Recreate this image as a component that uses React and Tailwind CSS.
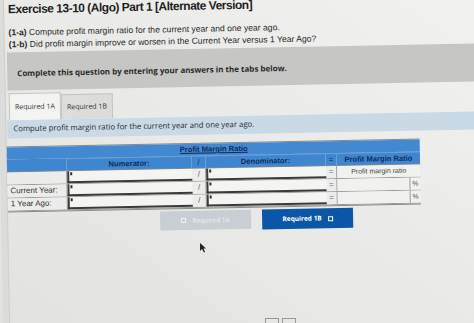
import React from 'react';

const COLS = 'grid-cols-[60px_125px_14px_120px_11px_83px]';

// Small dropdown marker drawn in the corner of each answer field
function Marker() {
  return <span className="absolute left-[1px] top-[1px] h-[3px] w-[2px] bg-[#333]" />;
}

function InputCell() {
  return (
    <div className="relative h-full border-b-2 border-l-2 border-[#3a3a3a] bg-[#f4f4f2]">
      <Marker />
    </div>
  );
}

function DataRow({ label }) {
  return (
    <div className={`grid h-[13px] ${COLS} border-b border-[#9a9a9a] text-[8px] leading-[12px]`}>
      <div className="border-r border-[#9a9a9a] bg-[#ececea] pl-[3px] text-[#333]">{label}</div>
      <InputCell />
      <div className="border-r border-[#9a9a9a] bg-[#ececea] text-center text-[#666]">/</div>
      <InputCell />
      <div className="border-r border-[#9a9a9a] bg-[#ececea] text-center text-[#7a8aa0]">=</div>
      <div className="flex bg-[#f1f1ef]">
        <div className="flex-1 border-r border-[#9a9a9a]" />
        <div className="w-[10px] text-center text-[7px] text-[#555]">%</div>
      </div>
    </div>
  );
}

export default function App() {
  return (
    <div className="relative h-[323px] w-[474px] overflow-hidden bg-linear-to-tr from-[#e2e2e0] to-[#f1f1ef] font-['Liberation_Sans',Arial,sans-serif]">
      {/* the sheet sits slightly tilted on screen */}
      <div className="flex h-[323px] w-[474px] rotate-[-1.1deg]">
        <div className="mt-[-20px] h-[370px] w-[7px] shrink-0 border-r border-[#cfcfcd] bg-[#dcdcda]" />

        <div className="flex flex-1 flex-col">
          <h1 className="mt-[-3px] pl-[4px] text-[12px] font-bold leading-[16px] tracking-[-0.5px] text-[#1f1f1f]">
            Exercise 13-10 (Algo) Part 1 [Alternate Version]
          </h1>

          <div className="mt-[9px] pl-[4px] text-[8.6px] leading-[12px] text-[#2a2a2a]">
            <p><span className="font-bold">(1-a)</span> Compute profit margin ratio for the current year and one year ago.</p>
            <p><span className="font-bold">(1-b)</span> Did profit margin improve or worsen in the Current Year versus 1 Year Ago?</p>
          </div>

          <div className="-mr-[30px] mt-[2px] ml-[2px] flex h-[38px] items-center bg-[#c6c6c4] pl-[10px] pt-[4px] font-['Open_Sans',sans-serif] text-[8px] font-bold text-[#2a2a2a]">
            Complete this question by entering your answers in the tabs below.
          </div>

          <div className="mt-[3px] flex items-end pl-[3px] font-['Open_Sans',sans-serif] text-[7px] text-[#333]">
            <div className="flex h-[27px] w-[52px] items-center justify-center border border-b-0 border-[#c4c4c2] bg-[#f3f3f1]">
              Required 1A
            </div>
            <div className="flex h-[25px] w-[52px] items-center justify-center border border-b-0 border-[#c4c4c2] bg-[#dcdcda]">
              Required 1B
            </div>
          </div>

          <div className="-mr-[30px] ml-[1px] flex h-[18px] items-center bg-[#c9d9e6] pl-[6px] font-['Open_Sans',sans-serif] text-[7.75px] text-[#2a2a2a]">
            Compute profit margin ratio for the current year and one year ago.
          </div>

          <div className="mt-[8px] w-[413px] border-y border-[#8a8a8a]">
            <div className="h-[12px] bg-[#4389d2] pl-[173px] text-[7.6px] font-bold leading-[12px] text-[#0f2c5a] underline">
              Profit Margin Ratio
            </div>
            <div className={`grid h-[13px] ${COLS} border-b border-[#8a8a8a] bg-[#3f86d0] text-[7.6px] font-bold leading-[12px] text-[#0f2c5a]`}>
              <div className="border-r border-[#6f9fd0]" />
              <div className="border-r border-t border-[#6f9fd0] text-center">Numerator:</div>
              <div className="border-r border-t border-[#6f9fd0] text-center font-normal">/</div>
              <div className="border-r border-t border-[#6f9fd0] text-center">Denominator:</div>
              <div className="border-r border-t border-[#6f9fd0] text-center font-normal">=</div>
              <div className="border-t border-[#6f9fd0] text-center">Profit Margin Ratio</div>
            </div>

            <div className={`grid h-[13px] ${COLS} border-b border-[#9a9a9a] text-[8px] leading-[12px]`}>
              <div className="border-r border-[#9a9a9a] bg-[#ececea]" />
              <InputCell />
              <div className="border-r border-[#9a9a9a] bg-[#ececea] text-center text-[#666]">/</div>
              <InputCell />
              <div className="border-r border-[#9a9a9a] bg-[#ececea] text-center text-[#7a8aa0]">=</div>
              <div className="bg-[#f1f1ef] text-center text-[7px] text-[#444]">Profit margin ratio</div>
            </div>
            <DataRow label="Current Year:" />
            <DataRow label="1 Year Ago:" />
          </div>

          <div className="mt-[2px] flex items-start pl-[152px] font-['Open_Sans',sans-serif] text-[6.5px]">
            <button className="flex h-[19px] w-[91px] items-center justify-center gap-[6px] bg-[#c8ced3] text-[#eef2f5]">
              <span className="inline-block h-[5px] w-[5px] border border-[#eef2f5]" />
              Required 1A
            </button>
            <button className="ml-[11px] flex h-[20px] w-[91px] items-center justify-center gap-[6px] bg-[#0c56a8] font-bold text-white">
              Required 1B
              <span className="inline-block h-[5px] w-[5px] border border-white" />
            </button>
          </div>
        </div>
      </div>

      {/* mouse pointer resting below the buttons */}
      <svg className="absolute left-[200px] top-[243px]" width="7" height="10" viewBox="0 0 7 10">
        <path d="M0 0 L0 8 L2 6 L4 9.5 L5 9 L3.5 5.5 L6 5.5 Z" fill="#222" />
      </svg>

      {/* page widget at the bottom edge */}
      <div className="absolute left-[265px] top-[318px] flex gap-[3px]">
        <div className="h-[8px] w-[14px] border border-[#9a9a9a]" />
        <div className="h-[8px] w-[14px] border border-[#9a9a9a]" />
      </div>
    </div>
  );
}
